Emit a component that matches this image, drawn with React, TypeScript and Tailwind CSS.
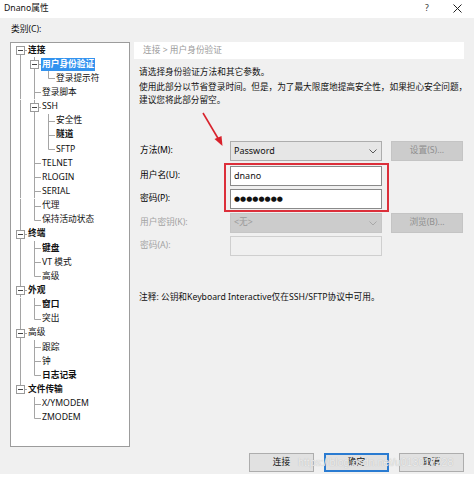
import { Fragment } from 'react';

interface TreeNode {
  label: string;
  bold?: boolean;
  selected?: boolean;
  children?: TreeNode[];
}

const tree: TreeNode[] = [
  {
    label: '连接',
    bold: true,
    children: [
      { label: '用户身份验证', bold: true, selected: true, children: [{ label: '登录提示符' }] },
      { label: '登录脚本' },
      {
        label: 'SSH',
        children: [{ label: '安全性' }, { label: '隧道', bold: true }, { label: 'SFTP' }],
      },
      { label: 'TELNET' },
      { label: 'RLOGIN' },
      { label: 'SERIAL' },
      { label: '代理' },
      { label: '保持活动状态' },
    ],
  },
  {
    label: '终端',
    bold: true,
    children: [{ label: '键盘', bold: true }, { label: 'VT 模式' }, { label: '高级' }],
  },
  {
    label: '外观',
    bold: true,
    children: [{ label: '窗口', bold: true }, { label: '突出' }],
  },
  {
    label: '高级',
    children: [{ label: '跟踪' }, { label: '钟' }, { label: '日志记录', bold: true }],
  },
  {
    label: '文件传输',
    bold: true,
    children: [{ label: 'X/YMODEM' }, { label: 'ZMODEM' }],
  },
];

interface Row {
  node: TreeNode;
  depth: number;
  guides: boolean[]; // ancestor has a following sibling
  hasNext: boolean;
  isFirstRoot: boolean;
}

function flatten(nodes: TreeNode[], depth = 0, guides: boolean[] = [], out: Row[] = []) {
  nodes.forEach((node, i) => {
    const hasNext = i < nodes.length - 1;
    out.push({ node, depth, guides, hasNext, isFirstRoot: depth === 0 && i === 0 });
    if (node.children) flatten(node.children, depth + 1, [...guides, hasNext], out);
  });
  return out;
}

const LINE = '#a5a5a5';

function Guide({ pipe }: { pipe: boolean }) {
  return (
    <svg width="14" height="14.15" className="shrink-0">
      {pipe && <line x1="7.5" y1="0" x2="7.5" y2="14.15" stroke={LINE} strokeWidth="1" />}
    </svg>
  );
}

function Connector({ up, down, box }: { up: boolean; down: boolean; box: boolean }) {
  return (
    <svg width="14" height="14.15" className="shrink-0">
      {up && <line x1="7.5" y1="0" x2="7.5" y2="7.5" stroke={LINE} strokeWidth="1" />}
      {down && <line x1="7.5" y1="7" x2="7.5" y2="14.15" stroke={LINE} strokeWidth="1" />}
      <line x1="7.5" y1="7.5" x2="14" y2="7.5" stroke={LINE} strokeWidth="1" />
      {box && (
        <>
          <rect x="3.5" y="3.5" width="8" height="8" fill="#fff" stroke="#9a9a9a" strokeWidth="1" />
          <line x1="5" y1="7.5" x2="10" y2="7.5" stroke="#444" strokeWidth="1" />
        </>
      )}
    </svg>
  );
}

function Tree() {
  const rows = flatten(tree);
  return (
    <div className="w-[120px] h-[405px] border border-[#9c9c9c] bg-white pl-[2px]">
      {rows.map((r, i) => (
        <div key={i} className="flex items-center h-[14.15px]">
          {r.guides.map((g, j) => (
            <Guide key={j} pipe={g} />
          ))}
          <Connector up={!r.isFirstRoot} down={r.hasNext} box={!!r.node.children} />
          <span
            className={
              'leading-[13px] whitespace-nowrap px-[1px] ' +
              (r.node.bold ? 'font-bold ' : '') +
              (r.node.selected ? 'bg-[#3393ef] text-white' : 'text-[#111]')
            }
          >
            {r.node.label}
          </span>
        </div>
      ))}
    </div>
  );
}

function Chevron({ color = '#5a5a5a' }: { color?: string }) {
  return (
    <svg width="8" height="5" viewBox="0 0 8 5">
      <path d="M0.5 0.5 L4 4 L7.5 0.5" fill="none" stroke={color} strokeWidth="1" />
    </svg>
  );
}

function FormRow({
  label,
  disabled,
  children,
  button,
}: {
  label: string;
  disabled?: boolean;
  children: React.ReactNode;
  button?: string;
}) {
  return (
    <div className="flex items-center h-[20px]">
      <div className={'w-[91px] pl-[1px] ' + (disabled ? 'text-[#a3a3a3]' : 'text-black')}>{label}</div>
      <div className="w-[152px] h-full">{children}</div>
      {button && (
        <div className="ml-[9px] w-[72px] h-full flex items-center justify-center bg-[#cccccc] border border-[#c4c4c4] text-[#8f8f8f]">
          {button}
        </div>
      )}
    </div>
  );
}

export default function App() {
  return (
    <div
      className="relative w-[474px] h-[479px] flex flex-col bg-white overflow-hidden text-[8.7px]"
      style={{ fontFamily: '"Noto Sans", "Noto Sans CJK SC", sans-serif' }}
    >
      {/* title bar */}
      <div className="h-[18px] bg-white flex items-center pl-[4px] text-[#111]">
        <span>Dnano属性</span>
        <div className="ml-auto flex items-center pr-[2px]">
          <span className="w-[30px] text-center text-[#333]">?</span>
          <span className="w-[30px] flex justify-center">
            <svg width="9" height="9" viewBox="0 0 9 9">
              <path d="M0.5 0.5 L8.5 8.5 M8.5 0.5 L0.5 8.5" stroke="#222" strokeWidth="1" />
            </svg>
          </span>
        </div>
      </div>

      <div className="flex-1 bg-[#f0f0f0] flex flex-col">
        <div className="h-[24px] flex items-center pl-[11px] text-[#111]">类别(C):</div>

        <div className="flex pl-[10px]">
          <Tree />

          <div className="ml-[4px] w-[330px] flex flex-col">
            <div className="h-[17px] bg-white flex items-center pl-[9px] text-[#9b9b9b]">连接 &gt; 用户身份验证</div>

            <div className="pl-[5px] text-[#111]">
              <p className="mt-[7px] leading-[13px]">请选择身份验证方法和其它参数。</p>
              <div className="mt-[1.5px] leading-[13px] whitespace-nowrap tracking-[-0.05px]">
                <p>使用此部分以节省登录时间。但是，为了最大限度地提高安全性，如果担心安全问题，</p>
                <p>建议您将此部分留空。</p>
              </div>

              <div className="mt-[34.5px] flex flex-col">
                <FormRow label="方法(M):" button="设置(S)...">
                  <div className="h-full flex items-center justify-between bg-[#e6e6e6] border border-[#adadad] pl-[3px] pr-[4px]">
                    <span className="text-[9px]">Password</span>
                    <Chevron />
                  </div>
                </FormRow>
                <div className="mt-[5px]">
                  <FormRow label="用户名(U):">
                    <div className="h-full flex items-center bg-white border border-[#8a8a8a] pl-[3px] text-[9px]">dnano</div>
                  </FormRow>
                </div>
                <div className="mt-[3px]">
                  <FormRow label="密码(P):">
                    <div className="h-full flex items-center bg-white border border-[#8a8a8a] pl-[3px]">
                      <span className="text-[7px]" style={{ fontFamily: '"DejaVu Sans", sans-serif' }}>
                        ●●●●●●●●
                      </span>
                    </div>
                  </FormRow>
                </div>
                <div className="mt-[4px]">
                  <FormRow label="用户密钥(K):" disabled button="浏览(B)...">
                    <div className="h-full flex items-center justify-between bg-[#cccccc] border border-[#c6c6c6] pl-[3px] pr-[4px] text-[#9a9a9a]">
                      <span>&lt;无&gt;</span>
                      <Chevron color="#a8a8a8" />
                    </div>
                  </FormRow>
                </div>
                <div className="mt-[3px]">
                  <FormRow label="密码(A):" disabled>
                    <div className="h-full bg-[#f0f0f0] border border-[#cfcfcf]" />
                  </FormRow>
                </div>
              </div>

              <p className="mt-[34.5px] leading-[13px]">注释: 公钥和Keyboard Interactive仅在SSH/SFTP协议中可用。</p>
            </div>
          </div>
        </div>

        <div className="mt-[6px] flex justify-end gap-[10px] pr-[10px]">
          {['连接', '确定', '取消'].map((b, i) => (
            <Fragment key={b}>
              <div
                className={
                  'w-[65px] h-[19px] flex items-center justify-center bg-[#e1e1e1] text-[#111] ' +
                  (i === 1 ? 'border-2 border-[#2a7bd1]' : 'border border-[#adadad]')
                }
              >
                {b}
              </div>
            </Fragment>
          ))}
        </div>
      </div>
      <div className="h-[5px] bg-white" />

      {/* annotation: red box around credentials */}
      <div className="absolute left-[224px] top-[163px] w-[165px] h-[49px] border-2 border-[#dc2f3a]" />
      {/* annotation: arrow */}
      <svg className="absolute left-0 top-0" width="474" height="479">
        <line x1="203" y1="113" x2="219" y2="140" stroke="#d8222c" strokeWidth="1.6" />
        <path d="M222.5 146 L214.5 139 L221.5 136 Z" fill="#d8222c" />
      </svg>

      <div
        className="absolute left-[298px] top-[455px] text-[10.5px] text-[#ececec] whitespace-nowrap"
        style={{ fontFamily: '"Liberation Sans", sans-serif', textShadow: '0 0 1px #b0b0b0' }}
      >
        https://blog.csdn.net/u013017228
      </div>
    </div>
  );
}
